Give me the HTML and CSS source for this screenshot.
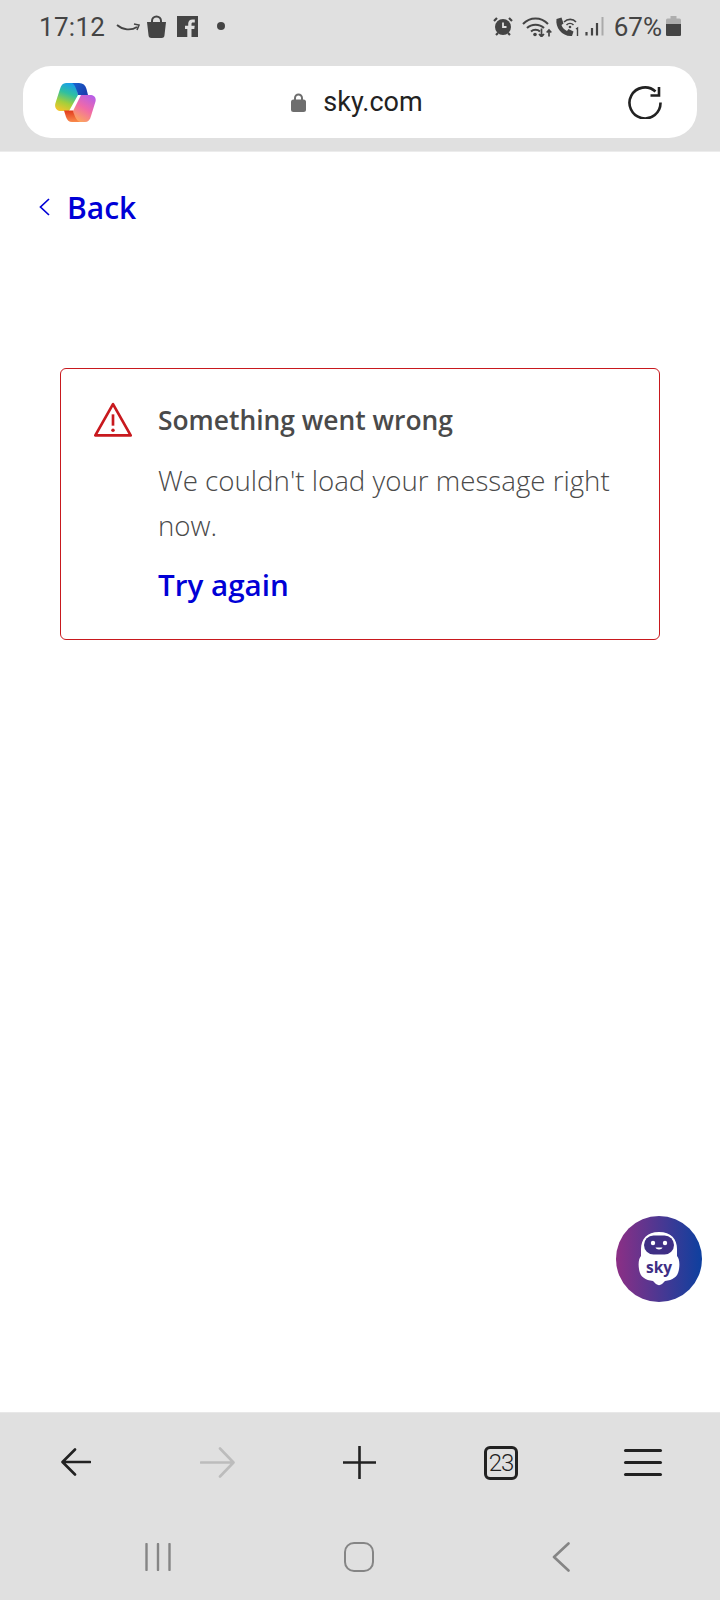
FILE: index.html
```html
<!DOCTYPE html>
<html lang="en">
<head>
<meta charset="utf-8">
<title>sky.com</title>
<link rel="stylesheet" href="styles.css">
</head>
<body>
<div class="phone">
  <header class="chrome">
    <div class="status">
      <div class="status-left">
        <span class="time">17:12</span>
        <svg class="i-smile" viewBox="0 0 24 9"><path d="M1 2c6 5 14 6 20 2" fill="none" stroke="#444" stroke-width="1.8"/><path d="M18 1l5 1-2 5" fill="none" stroke="#444" stroke-width="1.6"/></svg>
        <svg class="i-bag" viewBox="0 0 21 23"><path d="M6 8V6a4.500 4.500 0 0 1 9 0v2" fill="none" stroke="#444" stroke-width="2"/><path d="M1 7h19l-1.500 13a3 3 0 0 1-3 3h-10a3 3 0 0 1-3-3z" fill="#444"/></svg>
        <svg class="i-fb" viewBox="0 0 21 21"><path d="M0 0h21v21h-6.500v-8h2.800l.4-3.200h-3.200V8c0-1 .3-1.600 1.600-1.600h1.700V3.500c-.3 0-1.300-.1-2.400-.1-2.500 0-4.200 1.500-4.200 4.200v2.200H8V13h2.300v8H0z" fill="#444"/></svg>
        <span class="dot"></span>
      </div>
      <div class="status-right">
        <svg class="i-alarm" viewBox="0 0 20 19"><circle cx="10" cy="10" r="8" fill="#444"/><path d="M10 5.500V10h3.500" fill="none" stroke="#e0e0e0" stroke-width="1.800"/><path d="M1 4l3-3M19 4l-3-3M3 18l2-2M17 18l-2-2" stroke="#444" stroke-width="2.200" fill="none"/></svg>
        <svg class="i-wifi" viewBox="0 0 30 21"><g fill="none" stroke="#444" stroke-width="2"><path d="M1 8c7-7.500 18-7.500 25 0"/><path d="M5 12c4.500-4.500 12.500-4.500 17 0"/><path d="M9 15.500c2.500-2.300 6.500-2.300 9 0"/></g><circle cx="13" cy="18.500" r="1.800" fill="#444"/><path d="M19.500 12.500v8M17 18l2.500 2.700 2.500-2.700M27 20.500v-6M24.700 16.500l2.300-2.500 2.300 2.500" fill="none" stroke="#444" stroke-width="1.700"/></svg>
        <svg class="i-call" viewBox="0 0 24 20"><path d="M1.500 2l5-1.500 2 6-2 1.500c1 3 2.500 4.500 5.500 6l1.500-2 5 2.500-1.500 4.500C8 20 0 11 1.500 2z" fill="#444"/><g fill="none" stroke="#444" stroke-width="1.600"><path d="M9 5c3.500-3.500 9-3.500 12 0"/><path d="M11.500 8c2-2 5-2 7 0"/></g><circle cx="15" cy="10" r="1.300" fill="#444"/><path d="M21 12l1.500-1v8" fill="none" stroke="#444" stroke-width="1.400"/></svg>
        <svg class="i-signal" viewBox="0 0 19 19"><path d="M1.500 15v3.500M7 11v7.500M12 6v12.500" stroke="#444" stroke-width="2.200" fill="none"/><path d="M17.500 0v18.500" stroke="#aaa" stroke-width="2" fill="none"/></svg>
        <span class="pct">67%</span>
        <svg class="i-batt" viewBox="0 0 15 20"><path d="M4.500 0h6v2.500h3a1.500 1.500 0 0 1 1.500 1.500v14.500a1.500 1.500 0 0 1-1.500 1.500h-12a1.500 1.500 0 0 1-1.500-1.500v-14.500a1.500 1.500 0 0 1 1.500-1.500h3z" fill="#aeaeae"/><path d="M0 8h15v10.500a1.500 1.500 0 0 1-1.500 1.500h-12a1.500 1.500 0 0 1-1.500-1.500z" fill="#444"/></svg>
      </div>
    </div>
    <div class="urlbar">
      <svg class="copilot" viewBox="0 0 41 39">
        <defs>
          <linearGradient id="cpA" x1="0.600" y1="0" x2="0.300" y2="1"><stop offset="0" stop-color="#1a9fe8"/><stop offset="0.350" stop-color="#2fc0a0"/><stop offset="0.700" stop-color="#a6cf3a"/><stop offset="1" stop-color="#f2c52c"/></linearGradient>
          <linearGradient id="cpB" x1="0" y1="0" x2="1" y2="0.500"><stop offset="0" stop-color="#1767d0"/><stop offset="1" stop-color="#1b3fb0"/></linearGradient>
          <linearGradient id="cpC" x1="0.800" y1="0" x2="0.300" y2="1"><stop offset="0" stop-color="#b75ee8"/><stop offset="0.500" stop-color="#f06aa8"/><stop offset="1" stop-color="#fca65c"/></linearGradient>
          <linearGradient id="cpD" x1="0.500" y1="0" x2="0.500" y2="1"><stop offset="0" stop-color="#e23a1c"/><stop offset="1" stop-color="#f98a4c"/></linearGradient>
        </defs>
        <path d="M11 0h10l2 12-9 16H6c-4 0-7-3-5.500-8L5 6c1-4 3-6 6-6z" fill="url(#cpA)"/>
        <path d="M17 0h7c4 0 6.500 2 7.500 6l1.500 6H23C22 8 20 1 17 0z" fill="url(#cpB)"/>
        <path d="M26 12h9c4 0 6.500 2.500 5.500 6.500L36 33c-1 4-3 6-6 6H20l-2-11z" fill="url(#cpC)"/>
        <path d="M9 27.500h9c1 4 3 10 7 11.500h-8c-3 0-5-2-6-5z" fill="url(#cpD)"/>
      </svg>
      <div class="address">
        <svg class="lock" viewBox="0 0 15 19"><path d="M4 8V5a3.500 3.500 0 0 1 7 0v3" fill="none" stroke="#6e6e6e" stroke-width="2"/><rect x="0" y="6.500" width="15" height="12.500" rx="2.500" fill="#6e6e6e"/></svg>
        <span class="host">sky.com</span>
      </div>
      <svg class="reload" viewBox="0 0 34 33"><path d="M27.500 5.500a15.500 15.500 0 1 0 5 11" fill="none" stroke="#222" stroke-width="2.600"/><path d="M31 1v8.500h-8.500" fill="none" stroke="#222" stroke-width="2.600"/></svg>
    </div>
  </header>

  <main class="page">
    <a class="back" href="#">
      <svg class="back-chev" viewBox="0 0 11 18"><path d="M10 1L1.500 9l8.500 8" fill="none" stroke="#0000d6" stroke-width="1.700"/></svg>
      <span>Back</span>
    </a>
    <section class="card">
      <svg class="warn" viewBox="0 0 38 35"><path d="M19 2L1.800 32.500h34.400z" fill="none" stroke="#c8191e" stroke-width="2.600" stroke-linejoin="round"/><path d="M19 12v11" stroke="#c8191e" stroke-width="2.600" fill="none"/><circle cx="19" cy="27.500" r="1.700" fill="#c8191e"/></svg>
      <div class="msg">
        <h2 class="title">Something went wrong</h2>
        <p class="body">We couldn't load your message right now.</p>
        <a class="retry" href="#">Try again</a>
      </div>
    </section>
    <div class="fab">
      <svg class="bot" viewBox="0 0 42 56">
        <path d="M21 1C9 1 3 8 3 18v7c-2 2-3 7-2 13 1 8 6 11 14 12l3 3c2 1.500 4 1.500 6 0l3-3c8-1 13-4 14-12 1-6 0-11-2-13v-7C39 8 33 1 21 1z" fill="#fff"/>
        <rect x="6" y="4.500" width="30" height="19" rx="9.500" fill="#3f2f85"/>
        <circle cx="15" cy="12" r="2.200" fill="#fff"/><circle cx="27" cy="12" r="2.200" fill="#fff"/>
        <path d="M17.500 16.500h7c-.5 2.500-6.500 2.500-7 0z" fill="#fff"/>
        <text class="bot-word" x="21" y="42" text-anchor="middle">sky</text>
      </svg>
    </div>
  </main>

  <nav class="toolbar">
    <svg class="t-back" viewBox="0 0 30 28"><path d="M29 14H2M14 1.500L1.500 14 14 26.500" fill="none" stroke="#222" stroke-width="2.600" stroke-linecap="round" stroke-linejoin="round"/></svg>
    <svg class="t-fwd" viewBox="0 0 35 31"><path d="M1 15.500h32M20 1.500l13.500 14L20 29.500" fill="none" stroke="#bcbcbc" stroke-width="2.600" stroke-linecap="round" stroke-linejoin="round"/></svg>
    <svg class="t-plus" viewBox="0 0 33 33"><path d="M0.500 16.500h32M16.500 0.500v32" fill="none" stroke="#222" stroke-width="2.600" stroke-linecap="round"/></svg>
    <div class="tabs">23</div>
    <div class="menu"><span></span><span></span><span></span></div>
  </nav>
  <nav class="sysnav">
    <svg class="s-recent" viewBox="0 0 26 28"><path d="M1.500 1v26M13 1v26M24.500 1v26" fill="none" stroke="#858585" stroke-width="2.400" stroke-linecap="round"/></svg>
    <div class="s-home"></div>
    <svg class="s-back" viewBox="0 0 18 30"><path d="M16.500 1.500L2 15l14.500 13.500" fill="none" stroke="#858585" stroke-width="2.600" stroke-linecap="round" stroke-linejoin="round"/></svg>
  </nav>
</div>
</body>
</html>
```

FILE: styles.css
```css
* { box-sizing: border-box; }
html, body { margin: 0; padding: 0; background: #fff; }
svg { display: block; flex: none; }
a { text-decoration: none; }

.phone {
  width: 720px;
  height: 1600px;
  display: flex;
  flex-direction: column;
  font-family: "Open Sans", "Liberation Sans", sans-serif;
  overflow: hidden;
}

.chrome {
  height: 152px;
  flex: none;
  background: #e0e0e0;
  border-bottom: 1px solid #ececec;
  padding: 0 23px;
}
.status {
  height: 66px;
  display: flex;
  justify-content: space-between;
  align-items: flex-start;
  padding: 12px 16px 0 16px;
  font-family: Roboto, "Liberation Sans", sans-serif;
  color: #444;
}
.status-left, .status-right { display: flex; align-items: flex-start; }
.time { font-size: 26px; line-height: 30px; letter-spacing: 0.3px; }
.i-smile { width: 24px; height: 9px; margin: 11px 0 0 11px; }
.i-bag { width: 21px; height: 23px; margin: 3px 0 0 6px; }
.i-fb { width: 21px; height: 21px; margin: 4px 0 0 10px; }
.dot { width: 8px; height: 8px; border-radius: 50%; background: #444; margin: 10px 0 0 19px; }
.i-alarm { width: 20px; height: 19px; margin: 5px 0 0 0; }
.i-wifi { width: 30px; height: 21px; margin: 4px 0 0 9px; }
.i-call { width: 24px; height: 20px; margin: 5px 0 0 3px; }
.i-signal { width: 19px; height: 19px; margin: 5px 0 0 6px; }
.pct { font-size: 26px; line-height: 30px; margin-left: 10px; }
.i-batt { width: 15px; height: 20px; margin: 4px 0 0 4px; }

.urlbar {
  height: 72px;
  border-radius: 28px;
  background: #fff;
  position: relative;
  display: flex;
  align-items: center;
  justify-content: space-between;
  padding: 0 35px 0 32px;
}
.copilot { width: 41px; height: 39px; }
.address {
  display: flex;
  align-items: center;
  gap: 17px;
  margin-right: 10px;
}
.lock { width: 15px; height: 19px; }
.host { font-family: Roboto, "Liberation Sans", sans-serif; font-size: 27px; line-height: 30px; color: #222; }
.reload { width: 34px; height: 33px; }

.page {
  flex: 1;
  position: relative;
  background: #fff;
  padding: 37px 60px 0 39px;
}
.back {
  display: flex;
  align-items: center;
  gap: 17px;
  height: 36px;
  color: #0000d6;
  font-size: 30px;
  font-weight: 600;
}
.back-chev { width: 11px; height: 18px; }

.card {
  margin: 143px 0 0 21px;
  height: 272px;
  border: 1px solid #c8191e;
  border-radius: 6px;
  display: flex;
  padding: 33px 30px 0 32px;
  gap: 25px;
}
.warn { width: 40px; height: 36px; }
.msg { flex: 1; }
.title { margin: 0; font-size: 26.4px; line-height: 36px; font-weight: 600; color: #4a4a4a; }
.body { margin: 20px 0 0; font-size: 27.7px; line-height: 45px; font-weight: 300; color: #4a4a4a; }
.retry { display: block; margin-top: 17px; font-size: 29.6px; line-height: 40px; font-weight: 600; color: #0000d6; }

.fab {
  position: absolute;
  left: 616px;
  top: 1064px;
  width: 86px;
  height: 86px;
  border-radius: 50%;
  background: linear-gradient(90deg, #8c2f85, #0d409f);
  display: flex;
  align-items: center;
  justify-content: center;
}
.bot { width: 42px; height: 56px; }
.bot-word { font-family: "Open Sans", sans-serif; font-size: 15.5px; font-weight: 700; fill: #3f2f85; }

.toolbar {
  height: 110px;
  flex: none;
  background: #e0e0e0;
  border-top: 1px solid #e8e8e8;
  display: flex;
  align-items: flex-start;
  padding: 33px 0 0;
  position: relative;
}
.t-back { width: 30px; height: 28px; margin: 2px 0 0 61px; }
.t-fwd { width: 35px; height: 31px; margin: 1px 0 0 109px; }
.t-plus { width: 33px; height: 33px; margin: 0 0 0 108px; }
.tabs {
  width: 34px;
  height: 34px;
  margin: 0 0 0 108px;
  border: 3px solid #222;
  border-radius: 6px;
  font-family: Roboto, sans-serif;
  font-size: 24px;
  font-weight: 300;
  letter-spacing: -1px;
  line-height: 28px;
  text-align: center;
  color: #222;
}
.menu {
  width: 38px;
  height: 27px;
  margin: 3px 0 0 106px;
  display: flex;
  flex-direction: column;
  justify-content: space-between;
}
.menu span { height: 3px; border-radius: 2px; background: #222; }

.sysnav {
  height: 78px;
  flex: none;
  background: #e0e0e0;
  display: flex;
  align-items: flex-start;
  padding: 20px 0 0;
}
.s-recent { width: 26px; height: 28px; margin: 1px 0 0 145px; }
.s-home { width: 30px; height: 30px; margin: 0 0 0 173px; border: 2.600px solid #858585; border-radius: 10px; }
.s-back { width: 18px; height: 30px; margin: 0 0 0 178px; }
```
